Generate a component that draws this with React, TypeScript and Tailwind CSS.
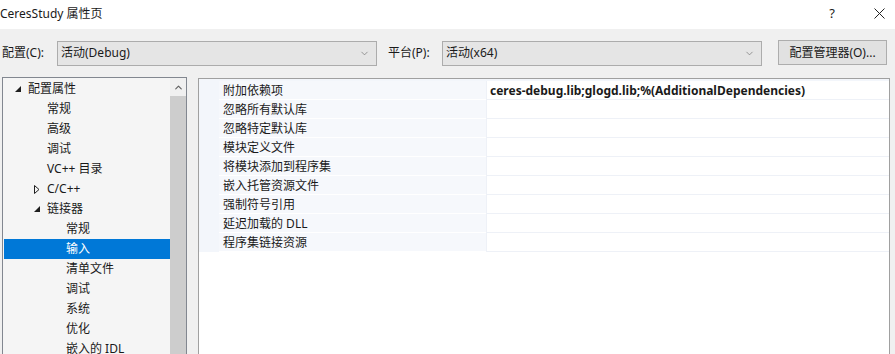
import { ChevronDown, ChevronUp } from 'lucide-react';

interface TreeNode {
  label: string;
  level: number;
  arrow?: 'open' | 'closed';
  selected?: boolean;
}

const TREE: TreeNode[] = [
  { label: '配置属性', level: 0, arrow: 'open' },
  { label: '常规', level: 1 },
  { label: '高级', level: 1 },
  { label: '调试', level: 1 },
  { label: 'VC++ 目录', level: 1 },
  { label: 'C/C++', level: 1, arrow: 'closed' },
  { label: '链接器', level: 1, arrow: 'open' },
  { label: '常规', level: 2 },
  { label: '输入', level: 2, selected: true },
  { label: '清单文件', level: 2 },
  { label: '调试', level: 2 },
  { label: '系统', level: 2 },
  { label: '优化', level: 2 },
  { label: '嵌入的 IDL', level: 2 },
];

const PROPS: { name: string; value?: string }[] = [
  { name: '附加依赖项', value: 'ceres-debug.lib;glogd.lib;%(AdditionalDependencies)' },
  { name: '忽略所有默认库' },
  { name: '忽略特定默认库' },
  { name: '模块定义文件' },
  { name: '将模块添加到程序集' },
  { name: '嵌入托管资源文件' },
  { name: '强制符号引用' },
  { name: '延迟加载的 DLL' },
  { name: '程序集链接资源' },
];

const FONT = "font-['Noto_Sans','Noto_Sans_CJK_SC',sans-serif]";

function Combo({ text }: { text: string }) {
  return (
    <div className="flex items-center justify-between w-[320px] h-[25px] border border-[#acacac] bg-[#e5e5e5] pl-[3px] pr-[6px]">
      <span className="text-[12px] text-[#1a1a1a]">{text}</span>
      <ChevronDown className="w-[11px] h-[11px] text-[#707070]" strokeWidth={1.5} />
    </div>
  );
}

function TreeArrow({ kind }: { kind: 'open' | 'closed' }) {
  if (kind === 'open') {
    return (
      <svg width="7" height="7" viewBox="0 0 7 7">
        <polygon points="6,0 6,6 0,6" fill="#1e1e1e" />
      </svg>
    );
  }
  return (
    <svg width="6" height="9" viewBox="0 0 6 9">
      <polygon points="0.5,0.5 5,4.5 0.5,8.5" fill="none" stroke="#1e1e1e" strokeWidth="1" />
    </svg>
  );
}

export default function App() {
  return (
    <div className={`w-[895px] h-[354px] overflow-hidden bg-[#f0f0f0] text-[#1a1a1a] ${FONT}`}>
      {/* 标题栏 */}
      <div className="h-[29px] bg-white flex items-center justify-between">
        <span className="text-[12px] -mt-[2px]">CeresStudy 属性页</span>
        <div className="flex items-center -mt-[2px]">
          <span className="text-[13px] mr-[39px]">?</span>
          <svg width="11" height="11" viewBox="0 0 11 11" className="mr-[10px]">
            <path d="M0.5 0.5 L10.5 10.5 M10.5 0.5 L0.5 10.5" stroke="#222" strokeWidth="1" />
          </svg>
        </div>
      </div>

      {/* 配置 / 平台 */}
      <div className="flex items-center h-[26px] mt-[11px]">
        <span className="text-[12px] w-[57px] pl-[2px]">配置(C):</span>
        <Combo text="活动(Debug)" />
        <span className="text-[12px] w-[54px] ml-[11px]">平台(P):</span>
        <Combo text="活动(x64)" />
        <button className="ml-[16px] w-[109px] h-[25px] -mt-[1px] border border-[#adadad] bg-[#e1e1e1] text-[12px]">
          配置管理器(O)...
        </button>
      </div>

      {/* 主体 */}
      <div className="flex mt-[11px] h-[300px]">
        <div className="ml-[2px] w-[185px] border border-[#828790] bg-[#f5f5f5] flex">
          <div className="w-[167px] pl-[1px] pt-[1px]">
            {TREE.map((n, i) => (
              <div
                key={i}
                className={`h-[20px] flex items-center text-[12px] ${n.selected ? 'bg-[#0078d7] text-white' : ''}`}
              >
                <div
                  className={`flex items-center justify-center w-[12px] shrink-0 ${
                    n.level === 0 ? 'ml-[8px]' : n.level === 1 ? 'ml-[27px]' : 'ml-[46px]'
                  }`}
                >
                  {n.arrow && <TreeArrow kind={n.arrow} />}
                </div>
                <span className="ml-[4px]">{n.label}</span>
              </div>
            ))}
          </div>
          <div className="w-[16px] flex flex-col">
            <div className="h-[18px] flex items-center justify-center bg-[#f0f0f0]">
              <ChevronUp className="w-[11px] h-[11px] text-[#606060]" strokeWidth={2.5} />
            </div>
            <div className="flex-1 bg-[#cdcdcd]" />
          </div>
        </div>

        <div className="ml-[11px] mt-[1px] w-[692px] border border-[#a0a0a0] bg-white">
          <div className="flex pt-[2px] bg-[#f3f6fb]">
            <div className="w-[20px]" />
            <div className="flex-1">
              {PROPS.map((p, i) => (
                <div key={i} className="flex h-[19px] text-[12px]">
                  <div className="w-[267px] bg-[#f6f8fc] border-b border-white pl-[4px] pt-[1px] flex items-center">
                    {p.name}
                  </div>
                  <div
                    className={`flex-1 bg-white border-b border-l border-[#eef1f7] pl-[3px] pt-[1px] flex items-center ${
                      p.value ? 'font-bold' : ''
                    }`}
                  >
                    {p.value}
                  </div>
                </div>
              ))}
            </div>
          </div>
        </div>
      </div>
    </div>
  );
}
